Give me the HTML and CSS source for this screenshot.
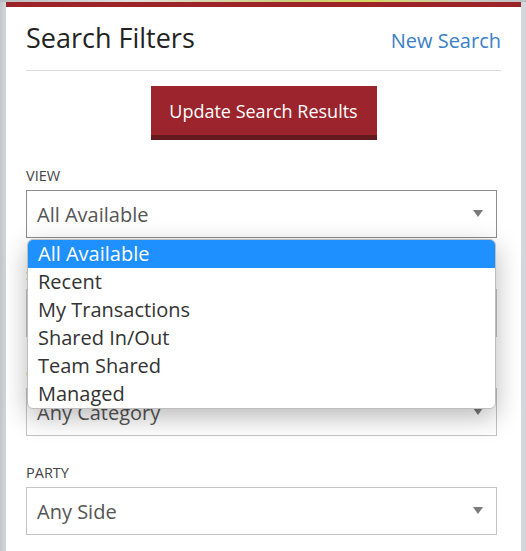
FILE: index.html
```html
<!DOCTYPE html>
<html lang="en">
<head>
<meta charset="utf-8">
<title>Search Filters</title>
<link rel="stylesheet" href="styles.css">
</head>
<body>
<div class="backdrop"></div>
<div class="panel">
  <div class="header">
    <h1 class="title">Search Filters</h1>
    <a class="new-search" href="#">New Search</a>
  </div>
  <div class="actions">
    <button class="update-btn" type="button">Update Search Results</button>
  </div>

  <div class="field field-view">
    <div class="label">VIEW</div>
    <div class="select is-open">
      <span class="select-text">All Available</span>
      <span class="arrow"></span>
    </div>
    <ul class="dropdown">
      <li class="option selected">All Available</li>
      <li class="option">Recent</li>
      <li class="option">My Transactions</li>
      <li class="option">Shared In/Out</li>
      <li class="option">Team Shared</li>
      <li class="option">Managed</li>
    </ul>
  </div>

  <div class="field">
    <div class="label">STATUS</div>
    <div class="select">
      <span class="select-text">Any Status</span>
      <span class="arrow"></span>
    </div>
  </div>

  <div class="field">
    <div class="label">CATEGORY</div>
    <div class="select">
      <span class="select-text">Any Category</span>
      <span class="arrow"></span>
    </div>
  </div>

  <div class="field">
    <div class="label">PARTY</div>
    <div class="select">
      <span class="select-text">Any Side</span>
      <span class="arrow"></span>
    </div>
  </div>
</div>
</body>
</html>
```

FILE: styles.css
```css
* { box-sizing: border-box; }

html, body {
  margin: 0;
  padding: 0;
  height: 100%;
  overflow: hidden;
}

body {
  font-family: "Open Sans", "Liberation Sans", sans-serif;
  background: linear-gradient(to right, #c2c6ca 0, #d3d6da 6px, #d3d6da 100%);
  padding: 2px 5px 0 6px;
  position: relative;
}

.backdrop {
  position: absolute;
  left: 0;
  right: 0;
  top: 0;
  height: 2px;
  background: linear-gradient(to right, #b9bcbf 0%, #e0e0dc 25%, #c9cf7a 55%, #d5d760 70%, #c7c9bf 90%, #c0c3c6 100%);
}

.panel {
  position: relative;
  background: #fff;
  border-top: 5px solid #9c2429;
  padding: 0 20px 0 20px;
  height: 100%;
}

.header {
  display: flex;
  justify-content: space-between;
  align-items: baseline;
  padding-top: 14px;
  padding-bottom: 15px;
  border-bottom: 1px solid #dcdcdc;
}

.title {
  margin: 0;
  font-size: 27px;
  font-weight: 400;
  color: #222;
  line-height: 34px;
}

.new-search {
  font-size: 20px;
  color: #3a7fc8;
  text-decoration: none;
}

.actions {
  display: flex;
  justify-content: center;
  padding-top: 15px;
}

.update-btn {
  font-family: "Open Sans", "Liberation Sans", sans-serif;
  font-size: 18px;
  color: #fff;
  background: #9c242d;
  border: none;
  border-bottom: 5px solid #641a1e;
  width: 226px;
  height: 54px;
  padding: 0;
}

.field {
  position: relative;
  margin-top: 26px;
  width: calc(100% - 4px);
}

.field + .field {
  margin-top: 27px;
}

.label {
  font-size: 14.5px;
  color: #444;
  line-height: 20px;
  margin-bottom: 4px;
}

.select {
  display: flex;
  align-items: center;
  justify-content: space-between;
  height: 48px;
  border: 1px solid #c4c4c4;
  background: #fff;
  padding: 0 13px 0 10px;
}

.select.is-open {
  border-color: #8c8c8c;
}

.select-text {
  font-size: 20px;
  color: #555;
}

.arrow {
  width: 0;
  height: 0;
  border-left: 5px solid transparent;
  border-right: 5px solid transparent;
  border-top: 7px solid #7a7a7a;
  margin-top: -2px;
}

.dropdown {
  position: absolute;
  z-index: 10;
  left: 1px;
  right: 1px;
  top: 73px;
  margin: 0;
  padding: 0;
  list-style: none;
  background: #fff;
  border: 1px solid #bdbdbd;
  border-radius: 6px;
  overflow: hidden;
  box-shadow: 0 8px 26px rgba(0, 0, 0, 0.28);
}

.option {
  height: 28px;
  line-height: 28px;
  padding-left: 10px;
  font-size: 20px;
  color: #333;
}

.option.selected {
  background: #1e90ff;
  color: #fff;
}
```
